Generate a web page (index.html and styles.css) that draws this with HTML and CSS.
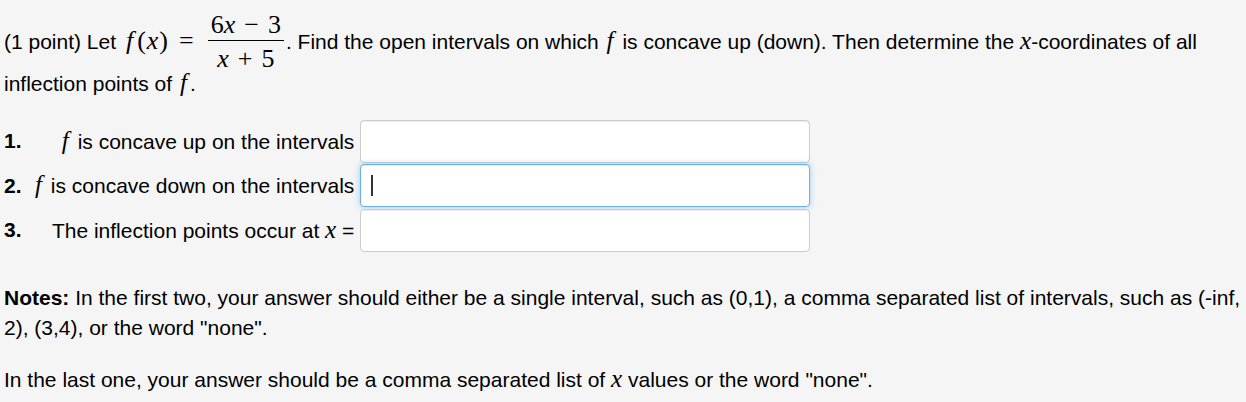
FILE: index.html
```html
<!DOCTYPE html>
<html>
<head>
<meta charset="utf-8">
<link rel="stylesheet" href="styles.css">
</head>
<body>
<div class="page">
  <p class="intro">(1 point) Let <span class="math"><span class="mi f">f</span><span class="mo">(</span><span class="mi">x</span><span class="mo">)</span><span class="mo eq">=</span><span class="frac"><span class="num"><span class="mn">6</span><span class="mi">x</span><span class="mo op">−</span><span class="mn">3</span></span><span class="den"><span class="mi">x</span><span class="mo op">+</span><span class="mn">5</span></span></span></span>. Find the open intervals on which <span class="mi f">f</span> is concave up (down). Then determine the <span class="mi">x</span>-coordinates of all inflection points of <span class="mi f">f</span>.</p>

  <table class="answers">
    <tr>
      <td class="n">1.</td>
      <td class="lab"><span class="mi f">f</span> is concave up on the intervals</td>
      <td><div class="box"></div></td>
    </tr>
    <tr>
      <td class="n">2.</td>
      <td class="lab"><span class="mi f">f</span> is concave down on the intervals</td>
      <td><div class="box focus"><span class="caret"></span></div></td>
    </tr>
    <tr>
      <td class="n">3.</td>
      <td class="lab">The inflection points occur at <span class="mi">x</span> =</td>
      <td><div class="box"></div></td>
    </tr>
  </table>

  <p class="note"><b>Notes:</b> In the first two, your answer should either be a single interval, such as (0,1), a comma separated list of intervals, such as <span class="nw">(-inf,</span> 2), (3,4), or the word "none".</p>
  <p class="note">In the last one, your answer should be a comma separated list of <span class="mi">x</span> values or the word "none".</p>
</div>
</body>
</html>
```

FILE: styles.css
```css
html, body {
  margin: 0;
  padding: 0;
  background: #f5f5f5;
}
.page {
  padding: 0 4px;
  width: 1238px;
  font-family: "Liberation Sans", Arial, sans-serif;
  font-size: 21px;
  color: #000;
  line-height: 30px;
}
.nw { white-space: nowrap; }
.intro {
  margin: 0;
  padding-top: 11px;
  line-height: 30px;
}
.math { margin-left: 2px; }
.mi {
  font-family: "Liberation Serif", "DejaVu Serif", serif;
  font-style: italic;
  font-size: 25px;
}
.mi.f { padding: 0 3px 0 2px; }
.mo, .mn {
  font-family: "Liberation Serif", "DejaVu Serif", serif;
  font-size: 25px;
}
.math .mo, .math .mn, .math .mi { font-size: 26px; }
.math .mo { margin: 0 1px; }
.eq { margin: 0 12px 0 10px !important; }
.op { margin: 0 9px !important; }
.frac {
  display: inline-block;
  vertical-align: -18px;
  margin: 0 2px -6px;
  text-align: center;
}
.num {
  display: block;
  padding: 0 3px;
  border-bottom: 1.6px solid #000;
  line-height: 28px;
}
.den {
  display: block;
  padding: 4px 3px 0;
  line-height: 28px;
}
.answers {
  border-collapse: collapse;
  margin-top: 20px;
}
.answers td {
  padding: 0;
  height: 44.5px;
  vertical-align: middle;
}
.answers td.n {
  font-weight: bold;
  width: 29px;
}
.answers td.lab {
  text-align: right;
  padding-right: 6px;
}
.box {
  height: 41px;
  background: #fff;
  border: 1px solid #ccc;
  border-radius: 4px;
  box-shadow: inset 0 1px 1px rgba(0,0,0,0.075);
  display: flex;
  align-items: center;
  padding-left: 10px;
  width: 438px;
}
.box.focus {
  border-color: #66afe9;
  box-shadow: inset 0 1px 1px rgba(0,0,0,0.075), 0 0 6px rgba(102,175,233,0.6);
}
.caret {
  width: 2px;
  height: 21px;
  background: #333;
}
.note {
  margin: 30px 0 0;
}
.note + .note {
  margin-top: 21px;
}
```
